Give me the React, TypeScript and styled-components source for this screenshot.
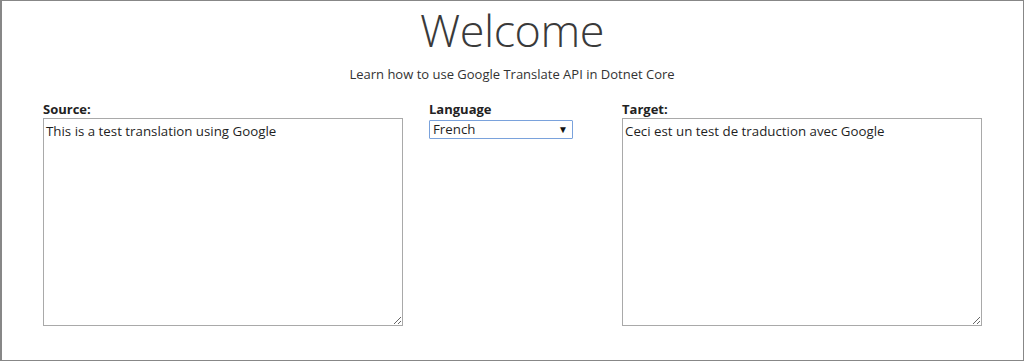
import styled, { createGlobalStyle } from 'styled-components'

const GlobalStyle = createGlobalStyle`
   html, body {
      margin: 0;
      padding: 0;
      background: #ffffff;
   }
   * {
      box-sizing: border-box;
   }
`

const App: React.FC = () => {
   return (
      <>
         <GlobalStyle />
         <Frame>
            <Header>
               <Title>Welcome</Title>
               <Subtitle>Learn how to use Google Translate API in Dotnet Core</Subtitle>
            </Header>
            <Columns>
               <Field $width={360}>
                  <Label>Source:</Label>
                  <TextBox defaultValue="This is a test translation using Google" />
               </Field>
               <Field $width={144}>
                  <Label>Language</Label>
                  <SelectWrap>
                     <Select defaultValue="fr">
                        <option value="fr">French</option>
                        <option value="de">German</option>
                        <option value="es">Spanish</option>
                     </Select>
                     <Arrow>▼</Arrow>
                  </SelectWrap>
               </Field>
               <Field $width={360}>
                  <Label>Target:</Label>
                  <TextBox defaultValue="Ceci est un test de traduction avec Google" />
               </Field>
            </Columns>
         </Frame>
      </>
   )
}

export default App

const Frame = styled.div`
   width: 1024px;
   height: 361px;
   border-top: 1px solid #878787;
   border-left: 2px solid #878787;
   border-right: 1px solid #878787;
   border-bottom: 1px solid #878787;
   padding-right: 1px;
   font-family: 'Open Sans', 'Noto Sans', sans-serif;
   color: #333333;
   overflow: hidden;
`

const Header = styled.div`
   display: flex;
   flex-direction: column;
   align-items: center;
   padding-top: 0;
`

const Title = styled.h1`
   margin: 0;
   font-family: 'Open Sans', sans-serif;
   font-weight: 300;
   font-size: 45px;
   line-height: 58px;
   color: #3a3a3a;
   letter-spacing: -0.5px;
`

const Subtitle = styled.p`
   margin: 6px 0 0 0;
   font-size: 13px;
   line-height: 18px;
   color: #333333;
`

const Columns = styled.div`
   display: flex;
   align-items: flex-start;
   gap: 26px;
   padding: 18px 0 0 41px;

   & > div:nth-child(2) {
      margin-right: 23px;
   }
`

const Field = styled.div<{ $width: number }>`
   display: flex;
   flex-direction: column;
   width: ${p => p.$width}px;
`

const Label = styled.label`
   font-family: 'Open Sans', sans-serif;
   font-weight: 700;
   font-size: 13px;
   line-height: 16px;
   color: #222222;
   margin-bottom: 1px;
`

const TextBox = styled.textarea`
   width: 360px;
   height: 208px;
   border: 1px solid #a9a9a9;
   padding: 3px 2px;
   font-family: 'Open Sans', sans-serif;
   font-size: 13.3px;
   line-height: 19px;
   color: #1f1f1f;
   resize: both;
   outline: none;
`

const SelectWrap = styled.div`
   position: relative;
   width: 144px;
   margin-top: 2px;
`

const Select = styled.select`
   appearance: none;
   display: block;
   width: 144px;
   height: 19px;
   border: 1px solid #7aa2dc;
   border-radius: 1px;
   background: #ffffff;
   padding: 0 0 0 3px;
   font-family: 'Open Sans', sans-serif;
   font-size: 13.3px;
   line-height: 17px;
   color: #1f1f1f;
   outline: none;
`

const Arrow = styled.span`
   position: absolute;
   right: 5px;
   top: 3px;
   font-size: 10px;
   line-height: 12px;
   color: #111111;
   pointer-events: none;
`
